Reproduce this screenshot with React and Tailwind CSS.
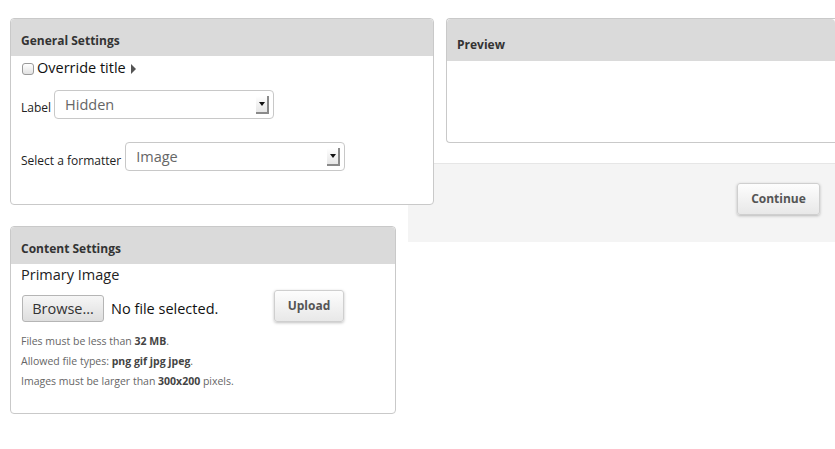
import React from "react";

function SelectArrow() {
  return (
    <span className="flex h-[18px] w-[13px] items-center justify-center border-b-2 border-r-2 border-b-[#8a8a8a] border-r-[#8a8a8a] bg-gradient-to-b from-white to-[#e6e6e6]">
      <svg width="6" height="4" viewBox="0 0 6 4">
        <path d="M0 0 L6 0 L3 4 Z" fill="#111" />
      </svg>
    </span>
  );
}

function FakeSelect({ value, width }) {
  return (
    <div
      className={`flex h-[29px] items-center justify-between rounded-[4px] border border-[#c8c8c8] bg-white pl-[10px] pr-[4px] ${width}`}
    >
      <span className="text-[14.5px] text-[#666]">{value}</span>
      <SelectArrow />
    </div>
  );
}

function PanelHeader({ children, h = "h-[37px]", pt = "pt-[6px]" }) {
  return (
    <div className={`flex items-center rounded-t-[4px] bg-[#dadada] px-[10px] ${pt} ${h}`}>
      <span className="text-[12px] font-bold text-[#333]">{children}</span>
    </div>
  );
}

function GreyButton({ children, className = "" }) {
  return (
    <button
      className={`flex items-center justify-center rounded-[3px] border border-[#cfcfcf] bg-gradient-to-b from-[#fdfdfd] to-[#e8e8e8] text-[12px] font-bold text-[#555] shadow-[0_1px_3px_rgba(0,0,0,0.25)] ${className}`}
    >
      {children}
    </button>
  );
}

export default function App() {
  return (
    <div
      className="relative h-[449px] w-[835px] overflow-hidden bg-white text-[#222]"
      style={{ fontFamily: '"Open Sans", "Noto Sans", sans-serif' }}
    >
      <div className="flex pt-[18px]">
        {/* Left column */}
        <div className="relative z-10 ml-[10px] flex w-[424px] shrink-0 flex-col gap-[21px]">
          <div className="flex h-[187px] flex-col rounded-[4px] border border-[#c9c9c9] bg-white">
            <PanelHeader>General Settings</PanelHeader>
            <div className="flex flex-col px-[10px]">
              <label className="flex h-[23px] items-center pt-[2px]">
                <span className="ml-[1px] h-[12px] w-[12px] rounded-[3px] border border-[#9a9a9a] bg-gradient-to-b from-white to-[#e2e2e2]" />
                <span className="ml-[3px] text-[14.5px] leading-none text-[#111]">Override title</span>
                <svg className="ml-[5px]" width="5" height="10" viewBox="0 0 5 10">
                  <path d="M0 0 L5 5 L0 10 Z" fill="#555" />
                </svg>
              </label>
              <div className="mt-[11px] flex items-center gap-[3px]">
                <span className="relative top-[3px] text-[12px] text-[#222]">Label</span>
                <FakeSelect value="Hidden" width="w-[220px]" />
              </div>
              <div className="mt-[23px] flex items-center gap-[4px]">
                <span className="relative top-[4px] text-[12px] text-[#222]">Select a formatter</span>
                <FakeSelect value="Image" width="w-[220px]" />
              </div>
            </div>
          </div>

          <div className="flex h-[188px] w-[386px] flex-col rounded-[4px] border border-[#c9c9c9] bg-white">
            <PanelHeader>Content Settings</PanelHeader>
            <div className="flex flex-col px-[10px]">
              <div className="h-[21px] text-[14.5px] leading-[21px] text-[#222]">Primary Image</div>
              <div className="mt-[5px] flex items-start">
                <div className="mt-[5px] flex w-[253px] items-center pl-[1px]">
                  <button className="flex h-[27px] w-[82px] items-center justify-center rounded-[3px] border border-[#b5b5b5] bg-gradient-to-b from-[#f6f6f6] to-[#dedede] text-[14.5px] text-[#333]">
                    Browse...
                  </button>
                  <span className="ml-[7px] text-[14.5px] text-[#111]">No file selected.</span>
                </div>
                <GreyButton className="h-[32px] w-[70px]">Upload</GreyButton>
              </div>
              <div className="mt-[9px] flex flex-col text-[10.5px] leading-[20px] text-[#666]">
                <div>
                  Files must be less than <b className="text-[#444]">32 MB</b>.
                </div>
                <div>
                  Allowed file types: <b className="text-[#444]">png gif jpg jpeg</b>.
                </div>
                <div>
                  Images must be larger than <b className="text-[#444]">300x200</b> pixels.
                </div>
              </div>
            </div>
          </div>
        </div>

        {/* Right column */}
        <div className="ml-[12px] flex flex-1 flex-col">
          <div className="flex h-[125px] flex-col rounded-l-[4px] border border-r-0 border-[#c9c9c9] bg-white">
            <PanelHeader h="h-[42px]" pt="pt-[9px]">Preview</PanelHeader>
          </div>
          <div className="ml-[-38px] mt-[20px] flex h-[79px] justify-end border-t border-[#e6e6e6] bg-[#f4f4f4] pr-[15px] pt-[19px]">
            <GreyButton className="h-[32px] w-[83px]">Continue</GreyButton>
          </div>
        </div>
      </div>
    </div>
  );
}
